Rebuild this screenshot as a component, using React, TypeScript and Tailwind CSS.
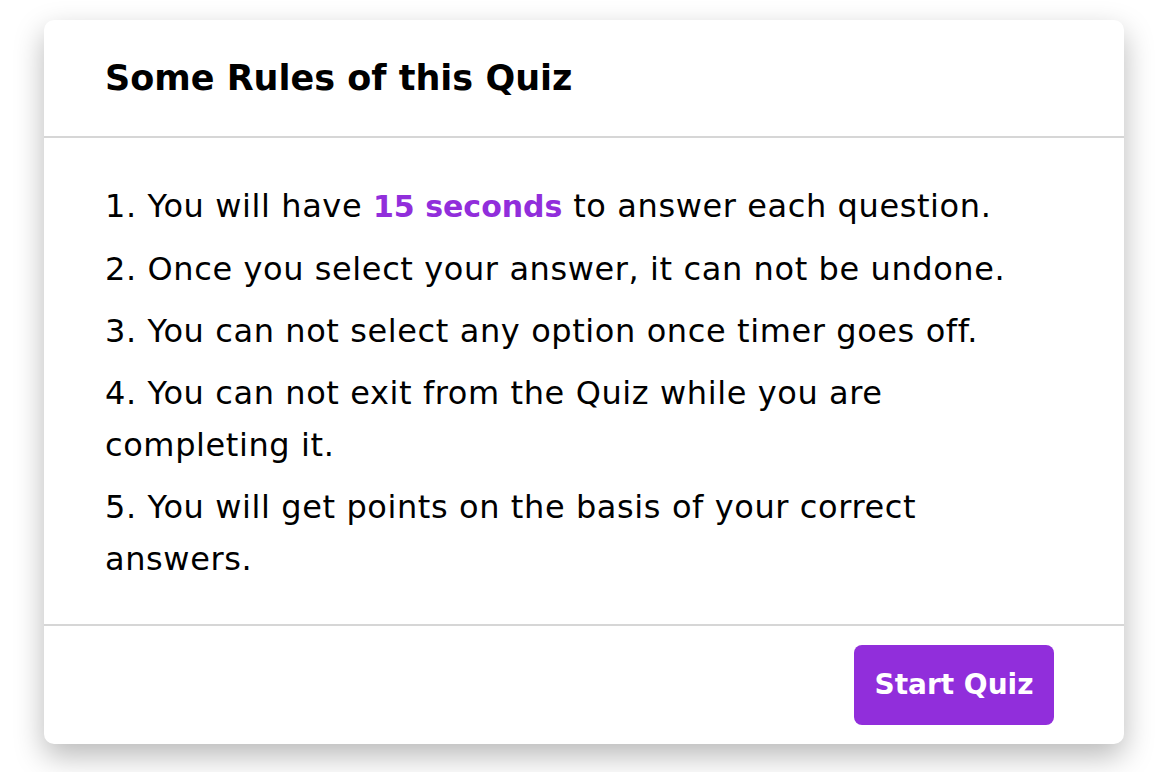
import React from "react";

const rules = [
  <>
    You will have{" "}
    <span className="text-[30px] font-semibold tracking-normal text-[#912edb]">15 seconds</span> to answer each
    question.
  </>,
  <>Once you select your answer, it can not be undone.</>,
  <>You can not select any option once timer goes off.</>,
  <>You can not exit from the Quiz while you are completing it.</>,
  <>You will get points on the basis of your correct answers.</>,
];

export default function App() {
  return (
    <div className="min-h-screen bg-white px-[44px] pt-[20px] font-['DejaVu_Sans',sans-serif] text-black">
      <div className="w-[1080px] rounded-[10px] bg-white shadow-[0_12px_30px_rgba(0,0,0,0.28)]">
        <div className="flex h-[118px] items-center border-b-2 border-[#d6d6d6] pl-[61px]">
          <h1 className="text-[35px] font-semibold leading-none">Some Rules of this Quiz</h1>
        </div>
        <div className="flex flex-col gap-[10px] border-b-2 border-[#d6d6d6] pt-[42px] pb-[39px] pl-[61px] pr-[90px] text-[32px] leading-[52px] tracking-[0.6px]">
          {rules.map((r, i) => (
            <p key={i}>
              {i + 1}. {r}
            </p>
          ))}
        </div>
        <div className="flex h-[118px] items-center justify-end pr-[70px]">
          <button className="h-[80px] w-[200px] rounded-[8px] bg-[#912edb] text-[28px] font-semibold text-white">
            Start Quiz
          </button>
        </div>
      </div>
    </div>
  );
}
